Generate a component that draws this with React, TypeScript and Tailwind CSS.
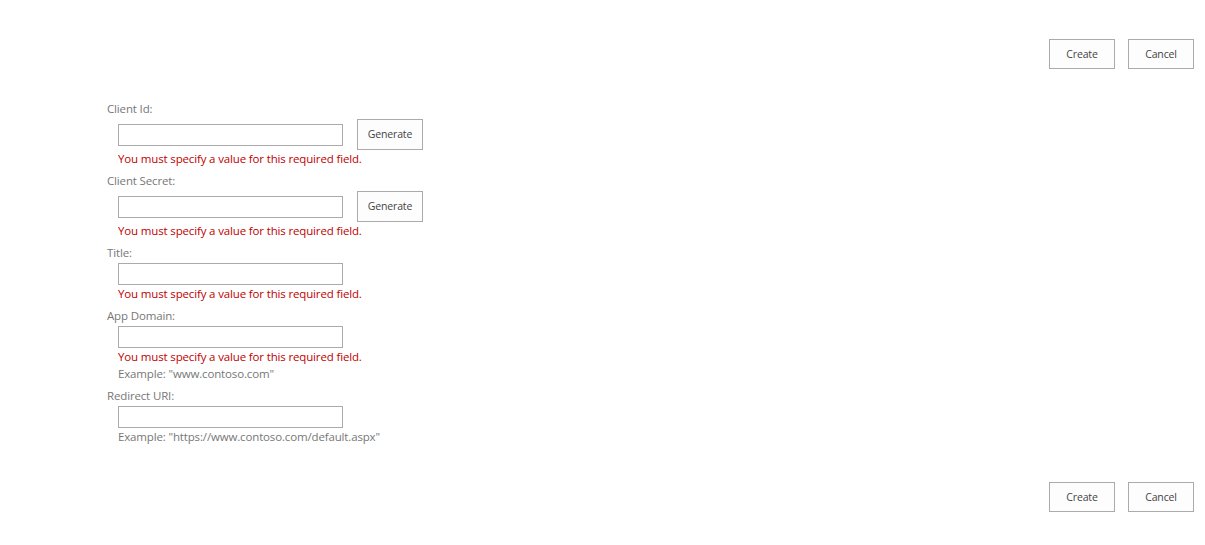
import React from 'react';

const ERROR = 'You must specify a value for this required field.';

const FIELDS = [
    { label: 'Client Id:', generate: true, error: true },
    { label: 'Client Secret:', generate: true, error: true },
    { label: 'Title:', generate: false, error: true },
    { label: 'App Domain:', generate: false, error: true, example: 'Example: "www.contoso.com"' },
    { label: 'Redirect URI:', generate: false, error: false, example: 'Example: "https://www.contoso.com/default.aspx"' },
];

const Button = ({ children }: { children: React.ReactNode }) => (
    <button className="w-[66px] h-[30px] border border-[#ababab] bg-[#fdfdfd] text-[10.5px] text-[#444] leading-none">
        {children}
    </button>
);

const ActionBar = () => (
    <div className="flex justify-end gap-[13px] pr-[11px]">
        <Button>Create</Button>
        <Button>Cancel</Button>
    </div>
);

export default function App() {
    return (
        <div className="w-[1205px] h-[545px] bg-white pt-[39px] text-[11.5px] leading-[17px] tracking-[-0.15px]" style={{ fontFamily: '"Open Sans", sans-serif' }}>
            <ActionBar />

            <div className="pl-[107px] pt-[31px] pb-[32px]">
                {FIELDS.map((f) => (
                    <div key={f.label} className="mb-[5px]">
                        <div className="text-[#777]">{f.label}</div>
                        <div className="flex items-center pl-[11px] mt-[2px]">
                            <input className="w-[225px] h-[22px] border border-[#ababab] bg-white outline-none" />
                            {f.generate && (
                                <button className="ml-[14px] w-[66px] h-[31px] border border-[#ababab] bg-[#fdfdfd] text-[10.5px] text-[#444] leading-none">
                                    Generate
                                </button>
                            )}
                        </div>
                        <div className="pl-[11px]">
                            {f.error && <div className="text-[#bf0000]">{ERROR}</div>}
                            {f.example && <div className="text-[#777]">{f.example}</div>}
                        </div>
                    </div>
                ))}
            </div>

            <ActionBar />
        </div>
    );
}
